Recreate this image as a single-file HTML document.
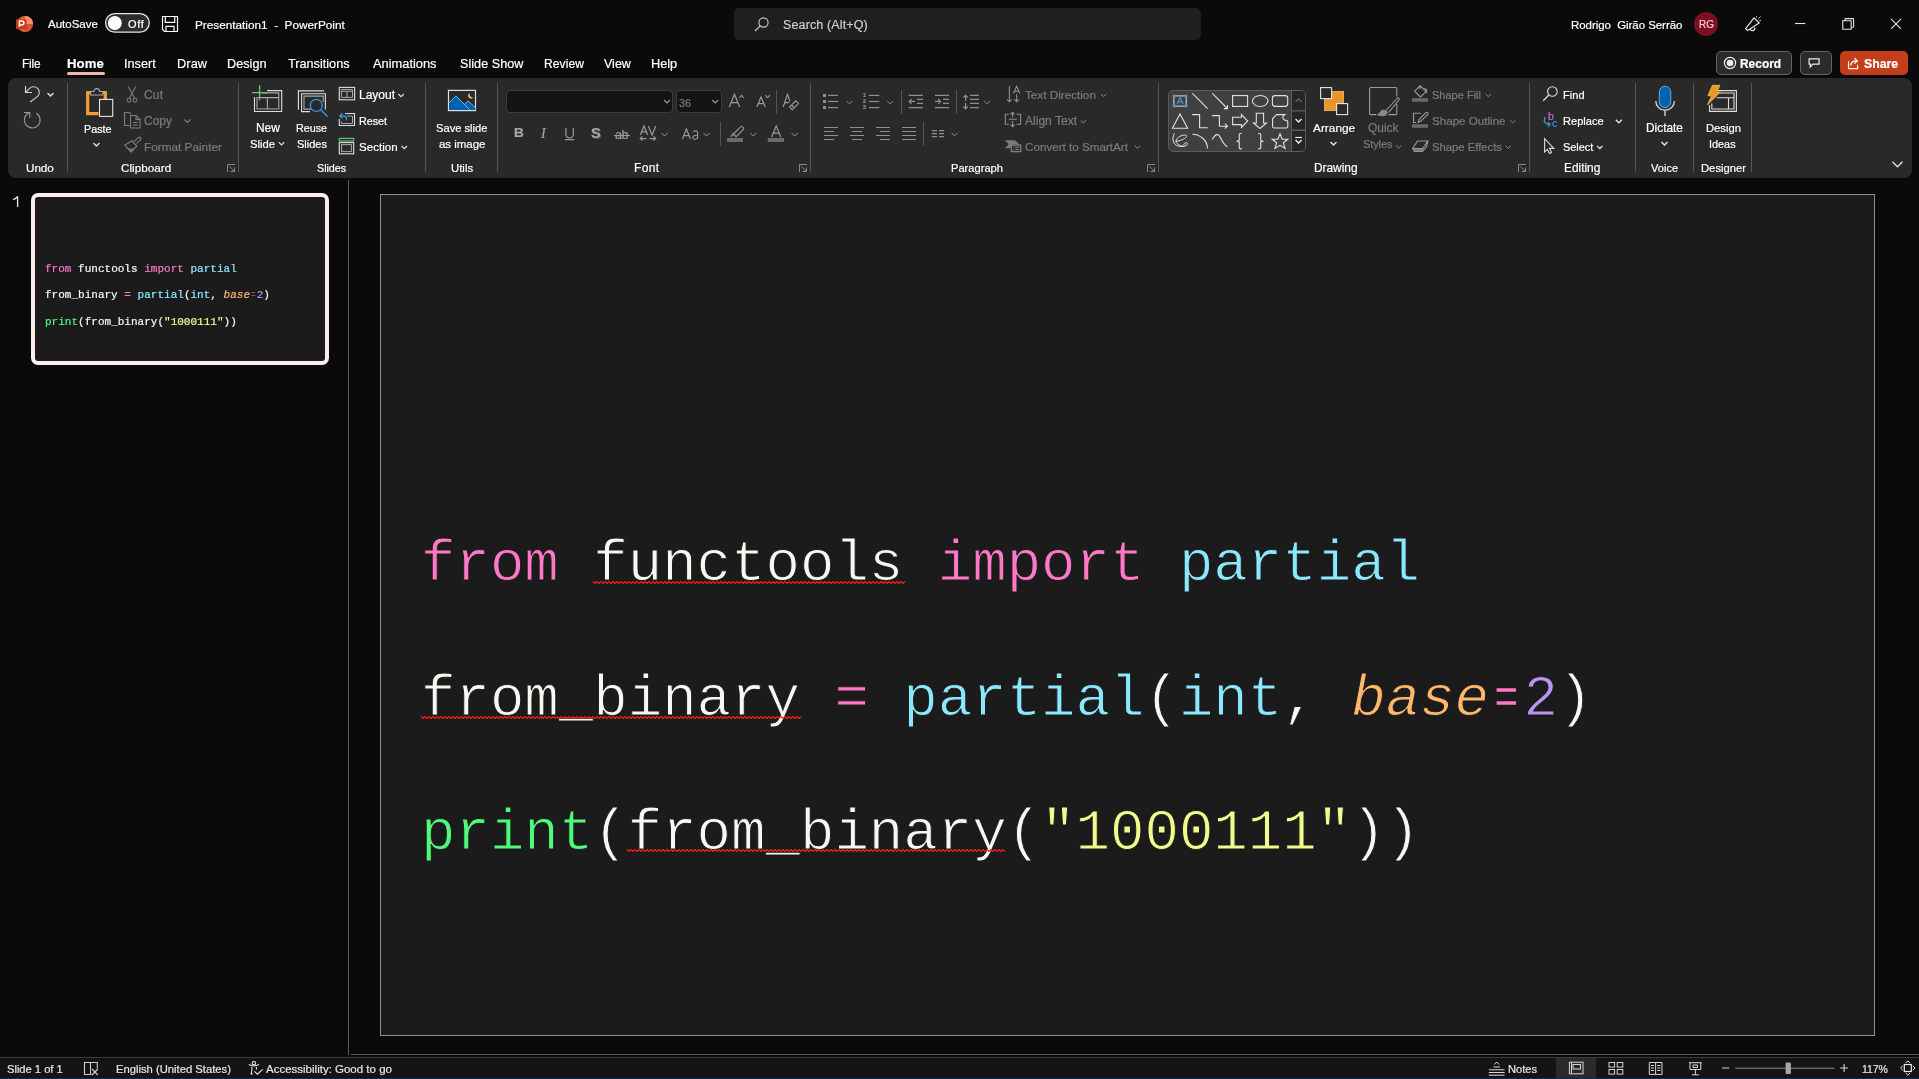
<!DOCTYPE html>
<html><head><meta charset="utf-8"><style>
html,body{margin:0;padding:0;}
body{width:1919px;height:1079px;overflow:hidden;background:#0a0a0a;position:relative;font-family:"Liberation Sans",sans-serif;}
.t{position:absolute;white-space:pre;will-change:transform;-webkit-text-stroke:0.2px currentColor;}
svg{overflow:visible}
</style></head><body>
<div class="t" style="left:48.00px;top:14.00px;font-size:11.52px;line-height:20.00px;color:#ffffff;font-weight:400;font-family:'Liberation Sans',sans-serif;">AutoSave</div>
<div class="t" style="left:194.50px;top:14.50px;font-size:11.78px;line-height:20.00px;color:#ffffff;font-weight:400;font-family:'Liberation Sans',sans-serif;">Presentation1  -  PowerPoint</div>
<div style="position:absolute;left:734px;top:8px;width:467px;height:32px;background:#1f1f1f;border-radius:5px;"></div>
<div class="t" style="left:783.00px;top:15.00px;font-size:12.50px;line-height:20.00px;color:#cfcfcf;font-weight:400;font-family:'Liberation Sans',sans-serif;letter-spacing:0.131px;">Search (Alt+Q)</div>
<div class="t" style="left:1571.00px;top:15.00px;font-size:11.45px;line-height:20.00px;color:#ffffff;font-weight:400;font-family:'Liberation Sans',sans-serif;letter-spacing:-0.025px;">Rodrigo  Girão Serrão</div>
<div class="t" style="left:22.00px;top:54.00px;font-size:11.88px;line-height:20.00px;color:#ffffff;font-weight:400;font-family:'Liberation Sans',sans-serif;letter-spacing:-0.208px;">File</div>
<div class="t" style="left:67.00px;top:53.50px;font-size:13.16px;line-height:20.00px;color:#ffffff;font-weight:700;font-family:'Liberation Sans',sans-serif;letter-spacing:0.083px;">Home</div>
<div class="t" style="left:123.75px;top:54.00px;font-size:12.65px;line-height:20.00px;color:#ffffff;font-weight:400;font-family:'Liberation Sans',sans-serif;letter-spacing:0.025px;">Insert</div>
<div class="t" style="left:177.00px;top:53.50px;font-size:12.77px;line-height:20.00px;color:#ffffff;font-weight:400;font-family:'Liberation Sans',sans-serif;letter-spacing:0.083px;">Draw</div>
<div class="t" style="left:227.00px;top:54.00px;font-size:12.64px;line-height:20.00px;color:#ffffff;font-weight:400;font-family:'Liberation Sans',sans-serif;letter-spacing:0.050px;">Design</div>
<div class="t" style="left:288.00px;top:54.00px;font-size:12.64px;line-height:20.00px;color:#ffffff;font-weight:400;font-family:'Liberation Sans',sans-serif;letter-spacing:0.025px;">Transitions</div>
<div class="t" style="left:372.50px;top:53.50px;font-size:12.85px;line-height:20.00px;color:#ffffff;font-weight:400;font-family:'Liberation Sans',sans-serif;">Animations</div>
<div class="t" style="left:459.50px;top:54.00px;font-size:12.63px;line-height:20.00px;color:#ffffff;font-weight:400;font-family:'Liberation Sans',sans-serif;letter-spacing:0.028px;">Slide Show</div>
<div class="t" style="left:544.00px;top:54.00px;font-size:12.06px;line-height:20.00px;color:#ffffff;font-weight:400;font-family:'Liberation Sans',sans-serif;letter-spacing:0.075px;">Review</div>
<div class="t" style="left:603.75px;top:54.00px;font-size:12.51px;line-height:20.00px;color:#ffffff;font-weight:400;font-family:'Liberation Sans',sans-serif;">View</div>
<div class="t" style="left:651.25px;top:53.50px;font-size:12.72px;line-height:20.00px;color:#ffffff;font-weight:400;font-family:'Liberation Sans',sans-serif;">Help</div>
<div style="position:absolute;left:67px;top:72px;width:38px;height:3px;background:#f2b5a8;border-radius:2px;"></div>
<div style="position:absolute;left:8px;top:78px;width:1904px;height:100px;background:#292929;border-radius:8px;"></div>
<div style="position:absolute;left:67px;top:83px;width:1px;height:89px;background:#545454;"></div>
<div style="position:absolute;left:238px;top:83px;width:1px;height:89px;background:#545454;"></div>
<div style="position:absolute;left:425px;top:83px;width:1px;height:89px;background:#545454;"></div>
<div style="position:absolute;left:497px;top:83px;width:1px;height:89px;background:#545454;"></div>
<div style="position:absolute;left:810px;top:83px;width:1px;height:89px;background:#545454;"></div>
<div style="position:absolute;left:1158px;top:83px;width:1px;height:89px;background:#545454;"></div>
<div style="position:absolute;left:1529px;top:83px;width:1px;height:89px;background:#545454;"></div>
<div style="position:absolute;left:1635px;top:83px;width:1px;height:89px;background:#545454;"></div>
<div style="position:absolute;left:1693px;top:83px;width:1px;height:89px;background:#545454;"></div>
<div style="position:absolute;left:1751px;top:83px;width:1px;height:89px;background:#545454;"></div>
<div style="position:absolute;left:776px;top:90px;width:1px;height:24px;background:#545454;"></div>
<div style="position:absolute;left:901px;top:90px;width:1px;height:24px;background:#545454;"></div>
<div style="position:absolute;left:956px;top:90px;width:1px;height:24px;background:#545454;"></div>
<div style="position:absolute;left:720px;top:122px;width:1px;height:24px;background:#545454;"></div>
<div style="position:absolute;left:923px;top:122px;width:1px;height:24px;background:#545454;"></div>
<div class="t" style="left:25.60px;top:157.50px;font-size:11.69px;line-height:20.00px;color:#ffffff;font-weight:400;font-family:'Liberation Sans',sans-serif;letter-spacing:-0.042px;">Undo</div>
<div class="t" style="left:120.60px;top:157.50px;font-size:11.68px;line-height:20.00px;color:#ffffff;font-weight:400;font-family:'Liberation Sans',sans-serif;letter-spacing:0.031px;">Clipboard</div>
<div class="t" style="left:317.00px;top:158.00px;font-size:10.80px;line-height:20.00px;color:#ffffff;font-weight:400;font-family:'Liberation Sans',sans-serif;letter-spacing:-0.050px;">Slides</div>
<div class="t" style="left:450.60px;top:158.00px;font-size:11.29px;line-height:20.00px;color:#ffffff;font-weight:400;font-family:'Liberation Sans',sans-serif;letter-spacing:0.031px;">Utils</div>
<div class="t" style="left:634.00px;top:158.00px;font-size:12.00px;line-height:20.00px;color:#ffffff;font-weight:400;font-family:'Liberation Sans',sans-serif;letter-spacing:0.333px;">Font</div>
<div class="t" style="left:950.60px;top:158.00px;font-size:11.14px;line-height:20.00px;color:#ffffff;font-weight:400;font-family:'Liberation Sans',sans-serif;">Paragraph</div>
<div class="t" style="left:1314.00px;top:158.00px;font-size:11.86px;line-height:20.00px;color:#ffffff;font-weight:400;font-family:'Liberation Sans',sans-serif;">Drawing</div>
<div class="t" style="left:1564.00px;top:158.00px;font-size:11.95px;line-height:20.00px;color:#ffffff;font-weight:400;font-family:'Liberation Sans',sans-serif;letter-spacing:-0.025px;">Editing</div>
<div class="t" style="left:1651.00px;top:158.00px;font-size:11.03px;line-height:20.00px;color:#ffffff;font-weight:400;font-family:'Liberation Sans',sans-serif;letter-spacing:0.031px;">Voice</div>
<div class="t" style="left:1700.60px;top:158.00px;font-size:11.25px;line-height:20.00px;color:#ffffff;font-weight:400;font-family:'Liberation Sans',sans-serif;">Designer</div>
<div class="t" style="left:83.50px;top:119.00px;font-size:10.80px;line-height:20.00px;color:#ffffff;font-weight:400;font-family:'Liberation Sans',sans-serif;">Paste</div>
<div class="t" style="left:144.00px;top:85.00px;font-size:12.00px;line-height:20.00px;color:#7c7c7c;font-weight:400;font-family:'Liberation Sans',sans-serif;letter-spacing:0.188px;">Cut</div>
<div class="t" style="left:144.00px;top:111.00px;font-size:12.00px;line-height:20.00px;color:#7c7c7c;font-weight:400;font-family:'Liberation Sans',sans-serif;">Copy</div>
<div class="t" style="left:144.00px;top:136.50px;font-size:11.79px;line-height:20.00px;color:#7c7c7c;font-weight:400;font-family:'Liberation Sans',sans-serif;">Format Painter</div>
<div class="t" style="left:256.00px;top:118.00px;font-size:11.94px;line-height:20.00px;color:#ffffff;font-weight:400;font-family:'Liberation Sans',sans-serif;letter-spacing:-0.062px;">New</div>
<div class="t" style="left:250.00px;top:134.00px;font-size:11.27px;line-height:20.00px;color:#ffffff;font-weight:400;font-family:'Liberation Sans',sans-serif;">Slide</div>
<div class="t" style="left:296.00px;top:118.00px;font-size:10.80px;line-height:20.00px;color:#ffffff;font-weight:400;font-family:'Liberation Sans',sans-serif;letter-spacing:-0.031px;">Reuse</div>
<div class="t" style="left:297.00px;top:134.00px;font-size:11.03px;line-height:20.00px;color:#ffffff;font-weight:400;font-family:'Liberation Sans',sans-serif;">Slides</div>
<div class="t" style="left:359.00px;top:85.00px;font-size:12.00px;line-height:20.00px;color:#ffffff;font-weight:400;font-family:'Liberation Sans',sans-serif;">Layout</div>
<div class="t" style="left:359.00px;top:111.00px;font-size:10.80px;line-height:20.00px;color:#ffffff;font-weight:400;font-family:'Liberation Sans',sans-serif;letter-spacing:-0.031px;">Reset</div>
<div class="t" style="left:359.00px;top:137.00px;font-size:11.55px;line-height:20.00px;color:#ffffff;font-weight:400;font-family:'Liberation Sans',sans-serif;letter-spacing:0.021px;">Section</div>
<div class="t" style="left:436.00px;top:118.00px;font-size:11.16px;line-height:20.00px;color:#ffffff;font-weight:400;font-family:'Liberation Sans',sans-serif;">Save slide</div>
<div class="t" style="left:438.50px;top:134.00px;font-size:11.45px;line-height:20.00px;color:#ffffff;font-weight:400;font-family:'Liberation Sans',sans-serif;">as image</div>
<div style="position:absolute;left:506px;top:90px;width:167px;height:23px;background:#141414;border:1px solid #3c3c3c;border-radius:4px;box-sizing:border-box;"></div>
<div style="position:absolute;left:676px;top:90px;width:46px;height:23px;background:#141414;border:1px solid #3c3c3c;border-radius:4px;box-sizing:border-box;"></div>
<div class="t" style="left:679.00px;top:93.00px;font-size:10.80px;line-height:20.00px;color:#7a7a7a;font-weight:400;font-family:'Liberation Sans',sans-serif;">36</div>
<div class="t" style="left:1025.00px;top:84.50px;font-size:11.71px;line-height:20.00px;color:#7c7c7c;font-weight:400;font-family:'Liberation Sans',sans-serif;">Text Direction</div>
<div class="t" style="left:1025.00px;top:111.00px;font-size:12.00px;line-height:20.00px;color:#7c7c7c;font-weight:400;font-family:'Liberation Sans',sans-serif;letter-spacing:0.028px;">Align Text</div>
<div class="t" style="left:1025.00px;top:136.50px;font-size:11.66px;line-height:20.00px;color:#7c7c7c;font-weight:400;font-family:'Liberation Sans',sans-serif;">Convert to SmartArt</div>
<div class="t" style="left:1313.00px;top:117.50px;font-size:11.79px;line-height:20.00px;color:#ffffff;font-weight:400;font-family:'Liberation Sans',sans-serif;letter-spacing:0.042px;">Arrange</div>
<div class="t" style="left:1367.50px;top:118.00px;font-size:11.90px;line-height:20.00px;color:#7c7c7c;font-weight:400;font-family:'Liberation Sans',sans-serif;letter-spacing:0.031px;">Quick</div>
<div class="t" style="left:1362.50px;top:134.00px;font-size:10.85px;line-height:20.00px;color:#7c7c7c;font-weight:400;font-family:'Liberation Sans',sans-serif;letter-spacing:-0.025px;">Styles</div>
<div class="t" style="left:1432.00px;top:85.00px;font-size:11.02px;line-height:20.00px;color:#7c7c7c;font-weight:400;font-family:'Liberation Sans',sans-serif;">Shape Fill</div>
<div class="t" style="left:1432.00px;top:110.50px;font-size:11.62px;line-height:20.00px;color:#7c7c7c;font-weight:400;font-family:'Liberation Sans',sans-serif;">Shape Outline</div>
<div class="t" style="left:1432.00px;top:137.00px;font-size:11.28px;line-height:20.00px;color:#7c7c7c;font-weight:400;font-family:'Liberation Sans',sans-serif;">Shape Effects</div>
<div class="t" style="left:1562.50px;top:85.00px;font-size:11.04px;line-height:20.00px;color:#ffffff;font-weight:400;font-family:'Liberation Sans',sans-serif;letter-spacing:0.042px;">Find</div>
<div class="t" style="left:1562.50px;top:111.00px;font-size:11.05px;line-height:20.00px;color:#ffffff;font-weight:400;font-family:'Liberation Sans',sans-serif;letter-spacing:0.021px;">Replace</div>
<div class="t" style="left:1562.50px;top:137.00px;font-size:10.97px;line-height:20.00px;color:#ffffff;font-weight:400;font-family:'Liberation Sans',sans-serif;letter-spacing:-0.025px;">Select</div>
<div class="t" style="left:1646.00px;top:118.00px;font-size:11.88px;line-height:20.00px;color:#ffffff;font-weight:400;font-family:'Liberation Sans',sans-serif;">Dictate</div>
<div class="t" style="left:1705.60px;top:118.00px;font-size:11.24px;line-height:20.00px;color:#ffffff;font-weight:400;font-family:'Liberation Sans',sans-serif;">Design</div>
<div class="t" style="left:1709.00px;top:134.00px;font-size:10.87px;line-height:20.00px;color:#ffffff;font-weight:400;font-family:'Liberation Sans',sans-serif;">Ideas</div>
<div style="position:absolute;left:1716px;top:51px;width:76px;height:24px;background:#2b2b2b;border:1px solid #666;border-radius:5px;box-sizing:border-box;"></div>
<div class="t" style="left:1740.00px;top:54.00px;font-size:11.91px;line-height:20.00px;color:#ffffff;font-weight:700;font-family:'Liberation Sans',sans-serif;letter-spacing:0.025px;">Record</div>
<div style="position:absolute;left:1800px;top:51px;width:32px;height:24px;background:#2b2b2b;border:1px solid #666;border-radius:5px;box-sizing:border-box;"></div>
<div style="position:absolute;left:1840px;top:51px;width:68px;height:24px;background:#c43e1c;border-radius:5px;"></div>
<div class="t" style="left:1864.00px;top:54.00px;font-size:12.24px;line-height:20.00px;color:#ffffff;font-weight:700;font-family:'Liberation Sans',sans-serif;">Share</div>
<div style="position:absolute;left:348px;top:180px;width:1px;height:875px;background:#5a5a5a;"></div>
<div style="position:absolute;left:31px;top:193px;width:298px;height:172px;border:4px solid #fbeeec;border-radius:7px;box-sizing:border-box;background:#1b1b1b;"></div>
<div style="position:absolute;left:380px;top:194px;width:1495px;height:842px;border:1px solid #8f8f8f;box-sizing:border-box;background:#1b1b1b;"></div>
<div style="position:absolute;left:351px;top:1054px;width:1568px;height:1px;background:#585858;"></div>
<div style="position:absolute;left:0px;top:1057px;width:1919px;height:1px;background:#3a3a3a;"></div>
<div style="position:absolute;left:0px;top:1058px;width:1919px;height:21px;background:#141414;"></div>
<div style="position:absolute;left:0px;top:1078px;width:1919px;height:1px;background:#0a2d4e;"></div>
<div class="t" style="left:7.00px;top:1059.00px;font-size:11.20px;line-height:20.00px;color:#e6e6e6;font-weight:400;font-family:'Liberation Sans',sans-serif;letter-spacing:-0.023px;">Slide 1 of 1</div>
<div class="t" style="left:115.50px;top:1059.00px;font-size:11.24px;line-height:20.00px;color:#e6e6e6;font-weight:400;font-family:'Liberation Sans',sans-serif;">English (United States)</div>
<div class="t" style="left:266.00px;top:1058.50px;font-size:11.50px;line-height:20.00px;color:#e6e6e6;font-weight:400;font-family:'Liberation Sans',sans-serif;">Accessibility: Good to go</div>
<div class="t" style="left:1507.50px;top:1059.00px;font-size:11.19px;line-height:20.00px;color:#e6e6e6;font-weight:400;font-family:'Liberation Sans',sans-serif;letter-spacing:-0.044px;">Notes</div>
<div style="position:absolute;left:1556px;top:1058px;width:40px;height:20px;background:#2a2a2a;"></div>
<div class="t" style="left:1861.60px;top:1059.50px;font-size:10.49px;line-height:20.00px;color:#e6e6e6;font-weight:400;font-family:'Liberation Sans',sans-serif;letter-spacing:-0.042px;">117%</div>
<div class="t" style="left:421.00px;top:497.92px;font-size:57.424px;line-height:134.00px;font-family:'Liberation Mono',monospace;-webkit-text-stroke:1px #1b1b1b;"><span style="color:#ff79c6;">from</span><span style="color:#f8f8f2;"> </span><span style="color:#f8f8f2;">functools</span><span style="color:#f8f8f2;"> </span><span style="color:#ff79c6;">import</span><span style="color:#f8f8f2;"> </span><span style="color:#8be9fd;">partial</span></div>
<div class="t" style="left:421.00px;top:633.02px;font-size:57.424px;line-height:134.00px;font-family:'Liberation Mono',monospace;-webkit-text-stroke:1px #1b1b1b;"><span style="color:#f8f8f2;">from_binary</span><span style="color:#f8f8f2;"> </span><span style="color:#ff79c6;">=</span><span style="color:#f8f8f2;"> </span><span style="color:#8be9fd;">partial</span><span style="color:#f8f8f2;">(</span><span style="color:#8be9fd;">int</span><span style="color:#f8f8f2;">, </span><span style="color:#ffb86c;font-style:italic;">base</span><span style="color:#ff79c6;display:inline-block;transform:scale(0.7,0.95);transform-origin:50%% 60%%;-webkit-text-stroke:0.4px #1b1b1b;">=</span><span style="color:#bd93f9;">2</span><span style="color:#f8f8f2;">)</span></div>
<div class="t" style="left:421.00px;top:766.62px;font-size:57.424px;line-height:134.00px;font-family:'Liberation Mono',monospace;-webkit-text-stroke:1px #1b1b1b;"><span style="color:#50fa7b;">print</span><span style="color:#f8f8f2;">(</span><span style="color:#f8f8f2;">from_binary</span><span style="color:#f8f8f2;">(</span><span style="color:#f1fa8c;">"1000111"</span><span style="color:#f8f8f2;">)</span><span style="color:#f8f8f2;">)</span></div>
<svg style="position:absolute;left:593px;top:581px;" width="312" height="4" viewBox="0 0 312 4" fill="none"><polyline points="0.0,0.5 2.0,2.5 4.0,0.5 6.0,2.5 8.0,0.5 10.0,2.5 12.0,0.5 14.0,2.5 16.0,0.5 18.0,2.5 20.0,0.5 22.0,2.5 24.0,0.5 26.0,2.5 28.0,0.5 30.0,2.5 32.0,0.5 34.0,2.5 36.0,0.5 38.0,2.5 40.0,0.5 42.0,2.5 44.0,0.5 46.0,2.5 48.0,0.5 50.0,2.5 52.0,0.5 54.0,2.5 56.0,0.5 58.0,2.5 60.0,0.5 62.0,2.5 64.0,0.5 66.0,2.5 68.0,0.5 70.0,2.5 72.0,0.5 74.0,2.5 76.0,0.5 78.0,2.5 80.0,0.5 82.0,2.5 84.0,0.5 86.0,2.5 88.0,0.5 90.0,2.5 92.0,0.5 94.0,2.5 96.0,0.5 98.0,2.5 100.0,0.5 102.0,2.5 104.0,0.5 106.0,2.5 108.0,0.5 110.0,2.5 112.0,0.5 114.0,2.5 116.0,0.5 118.0,2.5 120.0,0.5 122.0,2.5 124.0,0.5 126.0,2.5 128.0,0.5 130.0,2.5 132.0,0.5 134.0,2.5 136.0,0.5 138.0,2.5 140.0,0.5 142.0,2.5 144.0,0.5 146.0,2.5 148.0,0.5 150.0,2.5 152.0,0.5 154.0,2.5 156.0,0.5 158.0,2.5 160.0,0.5 162.0,2.5 164.0,0.5 166.0,2.5 168.0,0.5 170.0,2.5 172.0,0.5 174.0,2.5 176.0,0.5 178.0,2.5 180.0,0.5 182.0,2.5 184.0,0.5 186.0,2.5 188.0,0.5 190.0,2.5 192.0,0.5 194.0,2.5 196.0,0.5 198.0,2.5 200.0,0.5 202.0,2.5 204.0,0.5 206.0,2.5 208.0,0.5 210.0,2.5 212.0,0.5 214.0,2.5 216.0,0.5 218.0,2.5 220.0,0.5 222.0,2.5 224.0,0.5 226.0,2.5 228.0,0.5 230.0,2.5 232.0,0.5 234.0,2.5 236.0,0.5 238.0,2.5 240.0,0.5 242.0,2.5 244.0,0.5 246.0,2.5 248.0,0.5 250.0,2.5 252.0,0.5 254.0,2.5 256.0,0.5 258.0,2.5 260.0,0.5 262.0,2.5 264.0,0.5 266.0,2.5 268.0,0.5 270.0,2.5 272.0,0.5 274.0,2.5 276.0,0.5 278.0,2.5 280.0,0.5 282.0,2.5 284.0,0.5 286.0,2.5 288.0,0.5 290.0,2.5 292.0,0.5 294.0,2.5 296.0,0.5 298.0,2.5 300.0,0.5 302.0,2.5 304.0,0.5 306.0,2.5 308.0,0.5 310.0,2.5 312.0,0.5" stroke="#ff1c1c" stroke-width="1.15" fill="none"/></svg>
<svg style="position:absolute;left:421px;top:716px;" width="380" height="4" viewBox="0 0 380 4" fill="none"><polyline points="0.0,0.5 2.0,2.5 4.0,0.5 6.0,2.5 8.0,0.5 10.0,2.5 12.0,0.5 14.0,2.5 16.0,0.5 18.0,2.5 20.0,0.5 22.0,2.5 24.0,0.5 26.0,2.5 28.0,0.5 30.0,2.5 32.0,0.5 34.0,2.5 36.0,0.5 38.0,2.5 40.0,0.5 42.0,2.5 44.0,0.5 46.0,2.5 48.0,0.5 50.0,2.5 52.0,0.5 54.0,2.5 56.0,0.5 58.0,2.5 60.0,0.5 62.0,2.5 64.0,0.5 66.0,2.5 68.0,0.5 70.0,2.5 72.0,0.5 74.0,2.5 76.0,0.5 78.0,2.5 80.0,0.5 82.0,2.5 84.0,0.5 86.0,2.5 88.0,0.5 90.0,2.5 92.0,0.5 94.0,2.5 96.0,0.5 98.0,2.5 100.0,0.5 102.0,2.5 104.0,0.5 106.0,2.5 108.0,0.5 110.0,2.5 112.0,0.5 114.0,2.5 116.0,0.5 118.0,2.5 120.0,0.5 122.0,2.5 124.0,0.5 126.0,2.5 128.0,0.5 130.0,2.5 132.0,0.5 134.0,2.5 136.0,0.5 138.0,2.5 140.0,0.5 142.0,2.5 144.0,0.5 146.0,2.5 148.0,0.5 150.0,2.5 152.0,0.5 154.0,2.5 156.0,0.5 158.0,2.5 160.0,0.5 162.0,2.5 164.0,0.5 166.0,2.5 168.0,0.5 170.0,2.5 172.0,0.5 174.0,2.5 176.0,0.5 178.0,2.5 180.0,0.5 182.0,2.5 184.0,0.5 186.0,2.5 188.0,0.5 190.0,2.5 192.0,0.5 194.0,2.5 196.0,0.5 198.0,2.5 200.0,0.5 202.0,2.5 204.0,0.5 206.0,2.5 208.0,0.5 210.0,2.5 212.0,0.5 214.0,2.5 216.0,0.5 218.0,2.5 220.0,0.5 222.0,2.5 224.0,0.5 226.0,2.5 228.0,0.5 230.0,2.5 232.0,0.5 234.0,2.5 236.0,0.5 238.0,2.5 240.0,0.5 242.0,2.5 244.0,0.5 246.0,2.5 248.0,0.5 250.0,2.5 252.0,0.5 254.0,2.5 256.0,0.5 258.0,2.5 260.0,0.5 262.0,2.5 264.0,0.5 266.0,2.5 268.0,0.5 270.0,2.5 272.0,0.5 274.0,2.5 276.0,0.5 278.0,2.5 280.0,0.5 282.0,2.5 284.0,0.5 286.0,2.5 288.0,0.5 290.0,2.5 292.0,0.5 294.0,2.5 296.0,0.5 298.0,2.5 300.0,0.5 302.0,2.5 304.0,0.5 306.0,2.5 308.0,0.5 310.0,2.5 312.0,0.5 314.0,2.5 316.0,0.5 318.0,2.5 320.0,0.5 322.0,2.5 324.0,0.5 326.0,2.5 328.0,0.5 330.0,2.5 332.0,0.5 334.0,2.5 336.0,0.5 338.0,2.5 340.0,0.5 342.0,2.5 344.0,0.5 346.0,2.5 348.0,0.5 350.0,2.5 352.0,0.5 354.0,2.5 356.0,0.5 358.0,2.5 360.0,0.5 362.0,2.5 364.0,0.5 366.0,2.5 368.0,0.5 370.0,2.5 372.0,0.5 374.0,2.5 376.0,0.5 378.0,2.5 380.0,0.5" stroke="#ff1c1c" stroke-width="1.15" fill="none"/></svg>
<svg style="position:absolute;left:627px;top:849px;" width="378" height="4" viewBox="0 0 378 4" fill="none"><polyline points="0.0,0.5 2.0,2.5 4.0,0.5 6.0,2.5 8.0,0.5 10.0,2.5 12.0,0.5 14.0,2.5 16.0,0.5 18.0,2.5 20.0,0.5 22.0,2.5 24.0,0.5 26.0,2.5 28.0,0.5 30.0,2.5 32.0,0.5 34.0,2.5 36.0,0.5 38.0,2.5 40.0,0.5 42.0,2.5 44.0,0.5 46.0,2.5 48.0,0.5 50.0,2.5 52.0,0.5 54.0,2.5 56.0,0.5 58.0,2.5 60.0,0.5 62.0,2.5 64.0,0.5 66.0,2.5 68.0,0.5 70.0,2.5 72.0,0.5 74.0,2.5 76.0,0.5 78.0,2.5 80.0,0.5 82.0,2.5 84.0,0.5 86.0,2.5 88.0,0.5 90.0,2.5 92.0,0.5 94.0,2.5 96.0,0.5 98.0,2.5 100.0,0.5 102.0,2.5 104.0,0.5 106.0,2.5 108.0,0.5 110.0,2.5 112.0,0.5 114.0,2.5 116.0,0.5 118.0,2.5 120.0,0.5 122.0,2.5 124.0,0.5 126.0,2.5 128.0,0.5 130.0,2.5 132.0,0.5 134.0,2.5 136.0,0.5 138.0,2.5 140.0,0.5 142.0,2.5 144.0,0.5 146.0,2.5 148.0,0.5 150.0,2.5 152.0,0.5 154.0,2.5 156.0,0.5 158.0,2.5 160.0,0.5 162.0,2.5 164.0,0.5 166.0,2.5 168.0,0.5 170.0,2.5 172.0,0.5 174.0,2.5 176.0,0.5 178.0,2.5 180.0,0.5 182.0,2.5 184.0,0.5 186.0,2.5 188.0,0.5 190.0,2.5 192.0,0.5 194.0,2.5 196.0,0.5 198.0,2.5 200.0,0.5 202.0,2.5 204.0,0.5 206.0,2.5 208.0,0.5 210.0,2.5 212.0,0.5 214.0,2.5 216.0,0.5 218.0,2.5 220.0,0.5 222.0,2.5 224.0,0.5 226.0,2.5 228.0,0.5 230.0,2.5 232.0,0.5 234.0,2.5 236.0,0.5 238.0,2.5 240.0,0.5 242.0,2.5 244.0,0.5 246.0,2.5 248.0,0.5 250.0,2.5 252.0,0.5 254.0,2.5 256.0,0.5 258.0,2.5 260.0,0.5 262.0,2.5 264.0,0.5 266.0,2.5 268.0,0.5 270.0,2.5 272.0,0.5 274.0,2.5 276.0,0.5 278.0,2.5 280.0,0.5 282.0,2.5 284.0,0.5 286.0,2.5 288.0,0.5 290.0,2.5 292.0,0.5 294.0,2.5 296.0,0.5 298.0,2.5 300.0,0.5 302.0,2.5 304.0,0.5 306.0,2.5 308.0,0.5 310.0,2.5 312.0,0.5 314.0,2.5 316.0,0.5 318.0,2.5 320.0,0.5 322.0,2.5 324.0,0.5 326.0,2.5 328.0,0.5 330.0,2.5 332.0,0.5 334.0,2.5 336.0,0.5 338.0,2.5 340.0,0.5 342.0,2.5 344.0,0.5 346.0,2.5 348.0,0.5 350.0,2.5 352.0,0.5 354.0,2.5 356.0,0.5 358.0,2.5 360.0,0.5 362.0,2.5 364.0,0.5 366.0,2.5 368.0,0.5 370.0,2.5 372.0,0.5 374.0,2.5 376.0,0.5 378.0,2.5" stroke="#ff1c1c" stroke-width="1.15" fill="none"/></svg>
<div class="t" style="left:44.60px;top:256.06px;font-size:11.031px;line-height:26.00px;font-family:'Liberation Mono',monospace;-webkit-text-stroke:0.2px currentColor;"><span style="color:#ff79c6;">from</span><span style="color:#f8f8f2;"> </span><span style="color:#f8f8f2;">functools</span><span style="color:#f8f8f2;"> </span><span style="color:#ff79c6;">import</span><span style="color:#f8f8f2;"> </span><span style="color:#8be9fd;">partial</span></div>
<div class="t" style="left:44.60px;top:282.06px;font-size:11.031px;line-height:26.00px;font-family:'Liberation Mono',monospace;-webkit-text-stroke:0.2px currentColor;"><span style="color:#f8f8f2;">from_binary</span><span style="color:#f8f8f2;"> </span><span style="color:#ff79c6;">=</span><span style="color:#f8f8f2;"> </span><span style="color:#8be9fd;">partial</span><span style="color:#f8f8f2;">(</span><span style="color:#8be9fd;">int</span><span style="color:#f8f8f2;">, </span><span style="color:#ffb86c;font-style:italic;">base</span><span style="color:#ff79c6;display:inline-block;transform:scale(0.7,0.95);transform-origin:50%% 60%%;-webkit-text-stroke:0.4px #1b1b1b;">=</span><span style="color:#bd93f9;">2</span><span style="color:#f8f8f2;">)</span></div>
<div class="t" style="left:44.60px;top:308.56px;font-size:11.031px;line-height:26.00px;font-family:'Liberation Mono',monospace;-webkit-text-stroke:0.2px currentColor;"><span style="color:#50fa7b;">print</span><span style="color:#f8f8f2;">(</span><span style="color:#f8f8f2;">from_binary</span><span style="color:#f8f8f2;">(</span><span style="color:#f1fa8c;">"1000111"</span><span style="color:#f8f8f2;">)</span><span style="color:#f8f8f2;">)</span></div>
<svg style="position:absolute;left:15px;top:15px;" width="18" height="18" viewBox="0 0 18 18" fill="none"><circle cx="10" cy="9" r="8" fill="#e8603c"/>
<path d="M10 1 A8 8 0 0 1 18 9 L10 9 Z" fill="#ff8f6b"/>
<path d="M18 9 A8 8 0 0 1 10 17 L10 9 Z" fill="#d35230"/>
<rect x="1" y="4.3" width="10.6" height="10" rx="0.8" fill="#c43e1c"/>
<path d="M4.4 11.8 V6 H6.6 Q8.9 6 8.9 8 Q8.9 10 6.6 10 H4.4" stroke="#fff" stroke-width="1.5" fill="none"/></svg>
<svg style="position:absolute;left:104px;top:12px;" width="47" height="22" viewBox="0 0 47 22" fill="none"><rect x="1.6" y="1.6" width="43.6" height="18.6" rx="9.3" fill="#2b2b2b" stroke="#e6e6e6" stroke-width="1.3"/>
<circle cx="10.8" cy="11" r="7" fill="#ffffff"/></svg>
<div class="t" style="left:127.90px;top:14.20px;font-size:11.00px;line-height:20.00px;color:#ffffff;font-weight:400;font-family:'Liberation Sans',sans-serif;letter-spacing:0.650px;">Off</div>
<svg style="position:absolute;left:161px;top:15px;" width="18" height="18" viewBox="0 0 18 18" fill="none"><path d="M1.5 1.5 H16.5 V16.5 H3.5 L1.5 14.5 Z" stroke="#fff" stroke-width="1.2"/>
<path d="M4.3 1.5 V7.3 H13.7 V1.5" stroke="#fff" stroke-width="1.2"/>
<path d="M5 16.5 V11.3 H13 V16.5" stroke="#fff" stroke-width="1.2"/></svg>
<svg style="position:absolute;left:754px;top:16px;" width="16" height="16" viewBox="0 0 16 16" fill="none"><circle cx="9.5" cy="6.5" r="4.6" stroke="#cfcfcf" stroke-width="1.1"/>
<path d="M6.2 9.8 L1.5 14.5" stroke="#cfcfcf" stroke-width="1.2" stroke-linecap="round"/></svg>
<div class="t" style="left:514.2px;top:126.1px;font-size:13.6px;line-height:14px;font-weight:700;color:#a6a6a6;">B</div>
<div class="t" style="left:541.3px;top:127px;font-size:14px;line-height:14px;font-style:italic;font-family:'Liberation Serif',serif;color:#a6a6a6;">I</div>
<div class="t" style="left:591px;top:125.5px;font-size:14.5px;line-height:14px;font-weight:700;color:#a6a6a6;text-shadow:1px 1px 1px #555;">S</div>
<div class="t" style="left:615.4px;top:129.2px;font-size:12.5px;line-height:12px;color:#a0a0a0;letter-spacing:-0.5px;">ab</div>
<div class="t" style="left:863.3px;top:91.5px;font-size:5.5px;line-height:6.1px;color:#8f8f8f;font-weight:700;">1<br>2<br>3</div>
<div class="t" style="left:1547.6px;top:111.4px;font-size:10.5px;line-height:10px;color:#c96dd8;">b</div>
<div class="t" style="left:1551.6px;top:118.4px;font-size:10.5px;line-height:10px;color:#3a96dd;">c</div>
<div style="position:absolute;left:1694px;top:12px;width:24px;height:24px;background:#7a1020;border-radius:50%;"></div>
<div class="t" style="left:1698.50px;top:15.00px;font-size:10.00px;line-height:20.00px;color:#f4c8d0;font-weight:400;font-family:'Liberation Sans',sans-serif;">RG</div>
<svg style="position:absolute;left:0;top:0;pointer-events:none" width="1919" height="1079" viewBox="0 0 1919 1079" fill="none"><path d="M25.5 86 V92.5 H32" stroke="#d4d4d4" stroke-width="1.1" fill="none" />
<path d="M25.8 92.2 L29.6 88.4 A5.6 5.6 0 0 1 37.6 96.4 L30.2 102" stroke="#d4d4d4" stroke-width="1.1" fill="none" />
<path d="M47.50 93.00 L50.50 96.00 L53.50 93.00" stroke="#e0e0e0" stroke-width="1.4" fill="none" />
<path d="M24 112.5 H29.8 V117.8" stroke="#9a9a9a" stroke-width="1.1" fill="none" />
<path d="M36.3 113.3 A7.9 7.9 0 1 1 29.6 112.6" stroke="#9a9a9a" stroke-width="1.1" fill="none" />
<path d="M101 92.5 H105.3 V99 M98.5 113.6 H87.7 V92.5 H91.5" stroke="#f0a030" stroke-width="3.2" fill="none" />
<path d="M90.5 91.5 H93.8 A2.9 2.9 0 0 1 99.6 91.5 H102.9 V95 H90.5 Z" stroke="#a8a8a8" stroke-width="1.1" fill="#292929"/>
<rect x="99.5" y="99.4" width="13.2" height="17" rx="0" stroke="#e6e6e6" stroke-width="1.1" fill="#292929"/>
<path d="M93.50 143.00 L96.50 146.00 L99.50 143.00" stroke="#e0e0e0" stroke-width="1.4" fill="none" />
<path d="M128.2 86.5 L134.5 98 M135.8 86.5 L129.5 98" stroke="#7d7d7d" stroke-width="1.1" fill="none" />
<circle cx="129" cy="100.2" r="1.9" stroke="#7d7d7d" stroke-width="1.1" fill="none"/>
<circle cx="135" cy="100.2" r="1.9" stroke="#7d7d7d" stroke-width="1.1" fill="none"/>
<path d="M129.6 125.5 H124.5 V112.5 H129.5 L131 114" stroke="#7d7d7d" stroke-width="1.1" fill="none" />
<path d="M130.5 115.5 H136 L140 119.5 V128 H130.5 Z M136 115.5 V119.5 H140 M133 122.5 H137.5 M133 125 H137.5" stroke="#7d7d7d" stroke-width="1.1" fill="none" />
<path d="M184.50 119.50 L187.50 122.50 L190.50 119.50" stroke="#7d7d7d" stroke-width="1.1" fill="none" />
<path d="M127.2 148.3 L134.6 148.6 L131.2 152 Z" fill="#707070"/>
<path d="M124.6 145.2 L132.1 140.8 L136.8 145.9 L131.2 152.2 Z M132.3 141.4 L136.3 145.6" stroke="#7d7d7d" stroke-width="1.1" fill="none" />
<path d="M134.2 141.3 L138.3 137.6 A1.55 1.55 0 0 1 140.5 139.8 L136.5 143.7" stroke="#7d7d7d" stroke-width="1.1" fill="none" />
<path d="M227.5 172.0 V164.5 H235.0" stroke="#8a8a8a" stroke-width="1" fill="none" />
<path d="M229.5 166.5 L234.5 171.5 M230.5 171.5 H234.5 V167.5" stroke="#8a8a8a" stroke-width="1" fill="none" />
<path d="M267 90.6 H281.7 V111.5 H254.5 V97" stroke="#dedede" stroke-width="1.1" fill="none" />
<path d="M262 92.9 H278.8 V109 H257 V97.6 H278.8 M267.4 97.6 V109" stroke="#a8a8a8" stroke-width="1.1" fill="none" />
<path d="M259.6 85.2 V100.3 M252 92.6 H267" stroke="#64c878" stroke-width="1.3" fill="none" />
<path d="M278.75 142.15 L281.50 144.85 L284.25 142.15" stroke="#e0e0e0" stroke-width="1.2" fill="none" />
<path d="M298.4 109.8 V90.9 H324" stroke="#dedede" stroke-width="1.1" fill="none" />
<path d="M310 111.6 H301.6 V93.7 H325.4 V109.5" stroke="#dedede" stroke-width="1.1" fill="none" />
<path d="M311 109.1 H304 V96.1 H323.3 V102" stroke="#a8a8a8" stroke-width="1.1" fill="none" />
<circle cx="316.3" cy="105.4" r="6" stroke="#3a96dd" stroke-width="1.3" fill="none"/>
<path d="M320.6 109.8 L327.6 116.5" stroke="#3a96dd" stroke-width="1.4" fill="none" />
<rect x="339.3" y="87.4" width="15.3" height="12.4" rx="0" stroke="#dedede" stroke-width="1.1" fill="none"/>
<path d="M341.4 91.3 H352.5 V97.4 H341.4 Z M341.4 91.3 V89.6 H352.5 V91.3 M347 91.3 V97.4" stroke="#a8a8a8" stroke-width="1.0" fill="none" />
<path d="M398.25 93.95 L401.00 96.65 L403.75 93.95" stroke="#e0e0e0" stroke-width="1.2" fill="none" />
<path d="M345 113.5 H354.5 V125.5 H339.3 V119" stroke="#dedede" stroke-width="1.1" fill="none" />
<path d="M347 116 H352.5 V123.5 H341.4 V121.5" stroke="#a8a8a8" stroke-width="1.0" fill="none" />
<path d="M339.6 116 L342.5 113.3 M339.6 116 L342.5 118.5 M339.8 116 H343.5 A3 3 0 0 1 346.5 119 V120.5" stroke="#3a96dd" stroke-width="1.3" fill="none" />
<rect x="339.3" y="138.4" width="14.4" height="2.6" rx="0" stroke="#64c878" stroke-width="1.1" fill="none"/>
<rect x="339.3" y="142.6" width="14.4" height="11.2" rx="0" stroke="#dedede" stroke-width="1.1" fill="none"/>
<rect x="341.6" y="144.6" width="9.8" height="7" rx="0" stroke="#a8a8a8" stroke-width="1.0" fill="none"/>
<path d="M401.55 145.95 L404.30 148.65 L407.05 145.95" stroke="#e0e0e0" stroke-width="1.2" fill="none" />
<rect x="448.5" y="90.4" width="27" height="20.2" rx="0" stroke="#e0e0e0" stroke-width="1.2" fill="none"/>
<path d="M449.1 102.7 L456 95.9 L464.6 104.4 L468 100.9 L475.4 107.6 V110 H449.1 Z" fill="#0063b1"/>
<path d="M449.1 102.7 L456 95.9 L469.5 109.6 M464.6 104.4 L468 100.9 L475.4 107.6" stroke="#78c6f3" stroke-width="0.9" fill="none" />
<path d="M469.8 93 A3 3 0 1 0 473.4 97.6 A3.6 3.6 0 0 1 469.8 93 Z" fill="#f7b84b"/>
<path d="M664.00 100.00 L667.00 103.00 L670.00 100.00" stroke="#9a9a9a" stroke-width="1.1" fill="none" />
<path d="M712.20 100.00 L715.20 103.00 L718.20 100.00" stroke="#9a9a9a" stroke-width="1.1" fill="none" />
<path d="M729.3 107 L734.5 94.4 L739.7 107 M731.2 102.6 H737.8" stroke="#9a9a9a" stroke-width="1.2" fill="none" />
<path d="M739.4 98 L741.6 95.4 L743.8 98" stroke="#9a9a9a" stroke-width="1.1" fill="none" />
<path d="M756.8 107 L761 97 L765.2 107 M758.3 103.6 H763.7" stroke="#9a9a9a" stroke-width="1.2" fill="none" />
<path d="M765.2 95.2 L767.6 97.8 L770 95.2" stroke="#9a9a9a" stroke-width="1.1" fill="none" />
<path d="M783.2 107 L787.5 94.4 L790 101.5 M784.8 102.6 H789" stroke="#9a9a9a" stroke-width="1.2" fill="none" />
<path d="M791.5 109 L789.6 107.1 L795.8 100.8 L798.5 103.5 L792.3 109.8 Z M791.3 104.9 L794.5 108" stroke="#9a9a9a" stroke-width="1.1" fill="none"/>
<path d="M565.9 128 V134.2 A3.7 3.7 0 0 0 573.3 134.2 V128 M565 139.6 H574" stroke="#9a9a9a" stroke-width="1.2" fill="none" />
<path d="M613.9 135.5 H630" stroke="#9a9a9a" stroke-width="1.1" fill="none" />
<path d="M640.3 135 L644 125.9 L647.7 135 M641.6 131.8 H646.4 M648.4 125.9 L652.1 135 L655.8 125.9" stroke="#9a9a9a" stroke-width="1.2" fill="none" />
<path d="M640.2 138.6 H646.5 M642.5 136.5 L640.2 138.6 L642.5 140.7 M649.5 138.6 H655.8 M653.5 136.5 L655.8 138.6 L653.5 140.7" stroke="#9a9a9a" stroke-width="1.1" fill="none" />
<path d="M661.50 133.00 L664.50 136.00 L667.50 133.00" stroke="#9a9a9a" stroke-width="1.0" fill="none" />
<path d="M682.4 139 L686.4 129 L690.4 139 M683.8 135.6 H689" stroke="#9a9a9a" stroke-width="1.2" fill="none" />
<path d="M693.2 131.6 Q695.3 130.3 697 131.3 Q697.6 131.8 697.6 133 V139 M697.6 135.3 Q693 135 692.9 137.3 Q693 139.4 695.3 139.2 Q697 139 697.6 137.6" stroke="#9a9a9a" stroke-width="1.1" fill="none"/>
<path d="M703.50 133.00 L706.50 136.00 L709.50 133.00" stroke="#9a9a9a" stroke-width="1.0" fill="none" />
<rect x="727" y="138" width="16" height="4" rx="0" stroke="none" stroke-width="0" fill="#6a6a6a"/>
<path d="M731 136.5 L733.5 134 M733.5 134 L740.6 126.9 A1.4 1.4 0 0 1 742.6 126.9 L743.3 127.6 A1.4 1.4 0 0 1 743.3 129.6 L736.2 136.7 Z" stroke="#9a9a9a" stroke-width="1.1" fill="none" />
<path d="M730 137 L732.5 132.5 L735 135 Z" fill="#7a7a7a"/>
<path d="M750.30 133.00 L753.30 136.00 L756.30 133.00" stroke="#9a9a9a" stroke-width="1.0" fill="none" />
<path d="M771.6 137 L776.2 126 L780.8 137 M773.4 133.2 H779" stroke="#9a9a9a" stroke-width="1.2" fill="none" />
<rect x="767.8" y="138" width="16.2" height="4" rx="0" stroke="none" stroke-width="0" fill="#6a6a6a"/>
<path d="M791.60 133.00 L794.60 136.00 L797.60 133.00" stroke="#9a9a9a" stroke-width="1.0" fill="none" />
<path d="M799.5 172.0 V164.5 H807.0" stroke="#8a8a8a" stroke-width="1" fill="none" />
<path d="M801.5 166.5 L806.5 171.5 M802.5 171.5 H806.5 V167.5" stroke="#8a8a8a" stroke-width="1" fill="none" />
<rect x="823" y="93.9" width="3" height="3" rx="0" stroke="none" stroke-width="0" fill="#8f8f8f"/>
<path d="M828.1 95.4 H838" stroke="#8f8f8f" stroke-width="1.2" fill="none" />
<rect x="823" y="100.0" width="3" height="3" rx="0" stroke="none" stroke-width="0" fill="#8f8f8f"/>
<path d="M828.1 101.5 H838" stroke="#8f8f8f" stroke-width="1.2" fill="none" />
<rect x="823" y="106.1" width="3" height="3" rx="0" stroke="none" stroke-width="0" fill="#8f8f8f"/>
<path d="M828.1 107.6 H838" stroke="#8f8f8f" stroke-width="1.2" fill="none" />
<path d="M846.50 100.90 L849.50 103.90 L852.50 100.90" stroke="#8f8f8f" stroke-width="1.0" fill="none" />
<path d="M869 95.4 H879.3" stroke="#8f8f8f" stroke-width="1.2" fill="none" />
<path d="M869 101.5 H879.3" stroke="#8f8f8f" stroke-width="1.2" fill="none" />
<path d="M869 107.6 H879.3" stroke="#8f8f8f" stroke-width="1.2" fill="none" />
<path d="M887.20 100.90 L890.20 103.90 L893.20 100.90" stroke="#8f8f8f" stroke-width="1.0" fill="none" />
<path d="M908.8 95.4 H923 M917 99.4 H923 M917 103.4 H923 M908.8 107.6 H923" stroke="#8f8f8f" stroke-width="1.2" fill="none" />
<path d="M915 101.4 H909.2 M911.6 99 L909.2 101.4 L911.6 103.8" stroke="#8f8f8f" stroke-width="1.2" fill="none" />
<path d="M935 95.4 H949 M943 99.4 H949 M943 103.4 H949 M935 107.6 H949" stroke="#8f8f8f" stroke-width="1.2" fill="none" />
<path d="M935 101.4 H940.6 M938.2 99 L940.6 101.4 L938.2 103.8" stroke="#8f8f8f" stroke-width="1.2" fill="none" />
<path d="M965.6 95.3 V101 M963.3 97.6 L965.6 95.3 L967.9 97.6 M965.6 103 V108.8 M963.3 106.5 L965.6 108.8 L967.9 106.5" stroke="#8f8f8f" stroke-width="1.2" fill="none" />
<path d="M970 95.4 H979 M970 99.4 H979 M970 103.4 H979 M970 107.6 H979" stroke="#8f8f8f" stroke-width="1.2" fill="none" />
<path d="M984.30 100.90 L987.30 103.90 L990.30 100.90" stroke="#8f8f8f" stroke-width="1.0" fill="none" />
<path d="M823.9 127.5 H838.0 M823.9 131.5 H834.2 M823.9 135.5 H838.0 M823.9 139.5 H834.2" stroke="#8f8f8f" stroke-width="1.2" fill="none" />
<path d="M849.9 127.5 H864.0 M852.0 131.5 H862.0 M849.9 135.5 H864.0 M852.0 139.5 H862.0" stroke="#8f8f8f" stroke-width="1.2" fill="none" />
<path d="M876.0 127.5 H890.0 M880.0 131.5 H890.0 M876.0 135.5 H890.0 M880.0 139.5 H890.0" stroke="#8f8f8f" stroke-width="1.2" fill="none" />
<path d="M902.0 127.5 H916.0 M902.0 131.5 H916.0 M902.0 135.5 H916.0 M902.0 139.5 H916.0" stroke="#8f8f8f" stroke-width="1.2" fill="none" />
<path d="M931.8 130.6 H937 M939 130.6 H944 M931.8 133.6 H937 M939 133.6 H944 M931.8 136.7 H937 M939 136.7 H944" stroke="#8f8f8f" stroke-width="1.2" fill="none" />
<path d="M951.50 132.80 L954.50 135.80 L957.50 132.80" stroke="#8f8f8f" stroke-width="1.0" fill="none" />
<path d="M1009.4 86 V101.8 M1007 99.3 L1009.4 101.8 L1011.8 99.3" stroke="#8f8f8f" stroke-width="1.1" fill="none" />
<path d="M1013.3 93.6 L1016.6 86.3 L1019.9 93.6 M1014.4 91.3 H1018.8" stroke="#8f8f8f" stroke-width="1.1" fill="none" />
<path d="M1016.6 94.2 V101.8 M1014.2 99.3 L1016.6 101.8 L1019 99.3" stroke="#8f8f8f" stroke-width="1.1" fill="none" />
<path d="M1100.75 93.95 L1103.50 96.65 L1106.25 93.95" stroke="#8f8f8f" stroke-width="1.0" fill="none" />
<path d="M1008.8 114.3 H1005.3 V124.3 H1008.8 M1016.5 114.3 H1020.6 V124.3 H1016.5 M1008.8 119.3 H1016.9" stroke="#8f8f8f" stroke-width="1.1" fill="none" />
<path d="M1012.6 112.3 V117.6 M1010.6 114.3 L1012.6 112.3 L1014.6 114.3 M1012.6 121 V126.6 M1010.6 124.6 L1012.6 126.6 L1014.6 124.6" stroke="#8f8f8f" stroke-width="1.1" fill="none" />
<path d="M1080.55 120.15 L1083.30 122.85 L1086.05 120.15" stroke="#8f8f8f" stroke-width="1.0" fill="none" />
<path d="M1005 140.2 H1014.8 L1019.6 144.5 H1011 V147 L1009.5 148.2 H1005 L1008.7 144.2 Z" fill="#7a7a7a"/>
<rect x="1011.3" y="145.1" width="9.5" height="6.6" rx="0" stroke="#8f8f8f" stroke-width="1.1" fill="#292929"/>
<path d="M1013.3 147.2 H1014 M1015.2 147.2 H1019 M1013.3 149.6 H1014 M1015.2 149.6 H1019" stroke="#8f8f8f" stroke-width="1.0" fill="none" />
<path d="M1134.75 145.65 L1137.50 148.35 L1140.25 145.65" stroke="#8f8f8f" stroke-width="1.0" fill="none" />
<path d="M1147.5 172.0 V164.5 H1155.0" stroke="#8a8a8a" stroke-width="1" fill="none" />
<path d="M1149.5 166.5 L1154.5 171.5 M1150.5 171.5 H1154.5 V167.5" stroke="#8a8a8a" stroke-width="1" fill="none" />
<rect x="1168.5" y="90.5" width="137" height="61" rx="4.5" fill="#404040" stroke="#5c5c5c" stroke-width="1"/>
<path d="M1291.5 91 H1301 A4 4 0 0 1 1305 95 V147 A4 4 0 0 1 1301 151 H1291.5 Z" fill="#262626"/>
<path d="M1291.5 91 V151" stroke="#5c5c5c" stroke-width="1" fill="none" />
<path d="M1291.5 110.9 H1305 M1291.5 130.2 H1305" stroke="#5c5c5c" stroke-width="1.4" fill="none" />
<rect x="1173.9" y="95.9" width="12.3" height="10.2" rx="0" stroke="#e2e2e2" stroke-width="1.0" fill="none"/>
<rect x="1172.6000000000001" y="94.60000000000001" width="2.6" height="2.6" rx="0" stroke="none" stroke-width="0" fill="#3a96dd"/>
<rect x="1184.9" y="94.60000000000001" width="2.6" height="2.6" rx="0" stroke="none" stroke-width="0" fill="#3a96dd"/>
<rect x="1172.6000000000001" y="104.8" width="2.6" height="2.6" rx="0" stroke="none" stroke-width="0" fill="#3a96dd"/>
<rect x="1184.9" y="104.8" width="2.6" height="2.6" rx="0" stroke="none" stroke-width="0" fill="#3a96dd"/>
<path d="M1177.2 104 L1180.2 97.5 L1183.2 104 M1178.3 101.8 H1182.1" stroke="#3a96dd" stroke-width="1.2" fill="none" />
<path d="M1192.4 93.4 L1207.6 108.6" stroke="#e2e2e2" stroke-width="1.1" fill="none" />
<path d="M1212.3 93.4 L1227.4 108.5 M1224 108.6 H1227.5 V105.1" stroke="#e2e2e2" stroke-width="1.1" fill="none" />
<rect x="1232.6" y="95.6" width="15" height="10.8" rx="0" stroke="#e2e2e2" stroke-width="1.1" fill="none"/>
<ellipse cx="1260.2" cy="101" rx="7.8" ry="5.5" stroke="#e2e2e2" stroke-width="1.1" fill="none"/>
<rect x="1272.4" y="95.6" width="15.3" height="10.8" rx="2.6" stroke="#e2e2e2" stroke-width="1.1" fill="none"/>
<path d="M1180 113.9 L1187.7 128.2 H1172.4 Z" stroke="#e2e2e2" stroke-width="1.1" fill="none" />
<path d="M1192.2 114.6 H1199.6 V127.8 H1207.8" stroke="#e2e2e2" stroke-width="1.1" fill="none" />
<path d="M1212.1 115.6 H1219.4 V126.2 H1227.4 M1224.9 123.7 L1227.4 126.2 L1224.9 128.7" stroke="#e2e2e2" stroke-width="1.1" fill="none" />
<path d="M1232.6 117.2 H1241.5 V114.6 L1247.7 121 L1241.5 127.5 V124.6 H1232.6 Z" stroke="#e2e2e2" stroke-width="1.1" fill="none" />
<path d="M1256.3 113.3 H1263.6 V123 H1266.4 L1259.95 128.5 L1253.5 123 H1256.3 Z" stroke="#e2e2e2" stroke-width="1.1" fill="none" />
<path d="M1272.6 118.6 L1276.6 114.6 H1284.8 Q1282 116.2 1283.2 118.8 Q1284.2 120.4 1286.3 120.4 Q1287.8 120.6 1287.8 122.2 V126.4 Q1287.8 128 1286.2 128 H1274.2 Q1272.6 128 1272.6 126.4 Z" stroke="#e2e2e2" stroke-width="1.1" fill="none" />
<path d="M1174.5 133.4 C1171.5 138 1173 145 1178 146 C1182 147 1188 146 1187.5 143.5 C1187 141.5 1183 143.5 1184 145.5 C1186 148 1175.5 145 1176 141 C1177 136 1185 134 1186.5 135.5 C1188 137.5 1181 141 1175.5 141.5" stroke="#e2e2e2" stroke-width="1.0" fill="none" />
<path d="M1192.3 134.3 C1200 134.5 1207.3 140 1207.5 148.5" stroke="#e2e2e2" stroke-width="1.1" fill="none" />
<path d="M1212.2 139.5 C1214 136 1216 134.5 1217.7 134.6 C1220.5 134.7 1222.5 145 1227.6 146.6" stroke="#e2e2e2" stroke-width="1.1" fill="none" />
<path d="M1241.8 133.5 H1240.4 Q1239.3 133.5 1239.3 134.7 V140.2 L1237.2 141.2 L1239.3 142.2 V147.7 Q1239.3 148.9 1240.4 148.9 H1241.8" stroke="#e2e2e2" stroke-width="1.1" fill="none" />
<path d="M1258.2 133.5 H1259.6 Q1260.7 133.5 1260.7 134.7 V140.2 L1262.8 141.2 L1260.7 142.2 V147.7 Q1260.7 148.9 1259.6 148.9 H1258.2" stroke="#e2e2e2" stroke-width="1.1" fill="none" />
<path d="M1280 133.8 L1282.2 139.2 L1287.8 139.3 L1283.4 142.8 L1285 148.4 L1280 145.3 L1275 148.4 L1276.6 142.8 L1272.2 139.3 L1277.8 139.2 Z" stroke="#e2e2e2" stroke-width="1.1" fill="none" />
<path d="M1295.6 101.8 L1298.6 98.8 L1301.6 101.8" stroke="#6e6e6e" stroke-width="1.1" fill="none" />
<path d="M1295.60 119.10 L1298.60 122.10 L1301.60 119.10" stroke="#f0f0f0" stroke-width="1.4" fill="none" />
<path d="M1295.3 137.5 H1301.9" stroke="#f0f0f0" stroke-width="1.2" fill="none" />
<path d="M1295.60 140.00 L1298.60 143.00 L1301.60 140.00" stroke="#f0f0f0" stroke-width="1.4" fill="none" />
<rect x="1324.3" y="91.3" width="19.4" height="19.4" rx="0" stroke="#ffd27a" stroke-width="0.6" fill="#e8962a"/>
<rect x="1320.6" y="87.6" width="11" height="11" rx="0" stroke="#e6e6e6" stroke-width="1.1" fill="#292929"/>
<rect x="1336.6" y="103.6" width="11" height="11" rx="0" stroke="#e6e6e6" stroke-width="1.1" fill="#292929"/>
<path d="M1330.50 142.00 L1333.50 145.00 L1336.50 142.00" stroke="#e6e6e6" stroke-width="1.4" fill="none" />
<path d="M1376 114.6 H1370.6 Q1369.6 114.6 1369.6 113.6 V88.5 Q1369.6 87.5 1370.6 87.5 H1395.8 Q1396.8 87.5 1396.8 88.5 V96.5 M1396.8 104 V113.6 Q1396.8 114.6 1395.8 114.6 H1388.5" stroke="#9a9a9a" stroke-width="1.1" fill="none" />
<path d="M1386 110.5 L1397 98.5 A1.2 1.2 0 0 1 1399 100 L1388.4 112.6" stroke="#9a9a9a" stroke-width="1.1" fill="none" />
<path d="M1376 114.8 C1378 114.5 1379.5 113 1380.5 111.3 C1382 109 1385.5 109.5 1387 111.2 C1388.6 113.2 1386.5 116.2 1383 116.2 C1380 116.2 1378 115.5 1376 114.8 Z" fill="#8a8a8a"/>
<path d="M1395.85 145.35 L1398.60 148.05 L1401.35 145.35" stroke="#8a8a8a" stroke-width="1.0" fill="none" />
<rect x="1412" y="98.2" width="16" height="3.6" rx="0" stroke="none" stroke-width="0" fill="#6a6a6a"/>
<path d="M1414.6 91.2 L1420.2 85.8 L1426 91.6 L1420.5 97 Z M1420 86.2 V89" stroke="#9a9a9a" stroke-width="1.1" fill="none" />
<path d="M1424.5 88.4 Q1427.2 89 1426.6 93" stroke="#9a9a9a" stroke-width="1.1" fill="none" />
<rect x="1412" y="124.2" width="16" height="3.6" rx="0" stroke="none" stroke-width="0" fill="#6a6a6a"/>
<path d="M1421 113.3 H1413.5 V122.5 H1416" stroke="#9a9a9a" stroke-width="1.1" fill="none" />
<path d="M1418.2 122.3 L1419 119.5 L1425.8 112.7 A1.2 1.2 0 0 1 1427.6 114.5 L1420.8 121.3 Z" stroke="#9a9a9a" stroke-width="1.1" fill="none" />
<path d="M1412.6 148.6 L1417.5 141 H1428 L1426.5 146.8 L1422.5 151.5 H1414.5 Z M1412.6 148.6 H1422.8 L1427.6 141.3 M1422.8 148.6 V151.5" stroke="#9a9a9a" stroke-width="1.1" fill="none" />
<path d="M1413 148.9 H1422.6 V151.3 H1414.6 Z" fill="#7a7a7a"/>
<path d="M1485.55 93.95 L1488.30 96.65 L1491.05 93.95" stroke="#8a8a8a" stroke-width="1.0" fill="none" />
<path d="M1510.05 120.15 L1512.80 122.85 L1515.55 120.15" stroke="#8a8a8a" stroke-width="1.0" fill="none" />
<path d="M1505.55 145.65 L1508.30 148.35 L1511.05 145.65" stroke="#8a8a8a" stroke-width="1.0" fill="none" />
<path d="M1518.5 172.0 V164.5 H1526.0" stroke="#8a8a8a" stroke-width="1" fill="none" />
<path d="M1520.5 166.5 L1525.5 171.5 M1521.5 171.5 H1525.5 V167.5" stroke="#8a8a8a" stroke-width="1" fill="none" />
<circle cx="1552.4" cy="91.5" r="4.8" stroke="#dcdcdc" stroke-width="1.1" fill="none"/>
<path d="M1548.9 95 L1543.2 100.8" stroke="#dcdcdc" stroke-width="1.3" fill="none" />
<path d="M1545.4 117.2 Q1543.2 120.5 1545.2 122.8 Q1546.6 124.5 1550.2 124.5 M1547.9 122.2 L1550.2 124.5 L1547.9 126.8" stroke="#3a96dd" stroke-width="1.3" fill="none" />
<path d="M1615.80 119.80 L1618.80 122.80 L1621.80 119.80" stroke="#e6e6e6" stroke-width="1.3" fill="none" />
<path d="M1544.6 138.6 V152 L1547.4 149.3 L1549.5 153.6 L1551.6 152.6 L1549.5 148.4 H1553.8 Z" stroke="#dcdcdc" stroke-width="1.1" fill="none" />
<path d="M1597.05 145.85 L1599.80 148.55 L1602.55 145.85" stroke="#e6e6e6" stroke-width="1.3" fill="none" />
<rect x="1659.3" y="86.2" width="11.5" height="21.4" rx="5.75" fill="#0063b1" stroke="#72c3f3" stroke-width="0.8"/>
<path d="M1655.8 101 A9.3 9.3 0 0 0 1674.4 101 M1665 110.4 V116" stroke="#d0d0d0" stroke-width="1.4" fill="none" />
<path d="M1661.50 142.00 L1664.50 145.00 L1667.50 142.00" stroke="#e6e6e6" stroke-width="1.4" fill="none" />
<path d="M1716 90.6 H1736.4 V111.4 H1709.5 V105" stroke="#dedede" stroke-width="1.1" fill="none" />
<path d="M1719.5 93 H1734 V109 H1711.8 V103.5 M1716.5 97.8 H1734 M1728.5 97.8 V109" stroke="#dedede" stroke-width="1.1" fill="none" />
<path d="M1712.4 85.3 H1720 L1716.8 92.2 H1720.3 L1707.5 104.8 L1711.6 95.8 H1707.8 Z" fill="#e8962a" stroke="#ffd050" stroke-width="0.7"/>
<path d="M1892.50 161.80 L1897.50 166.80 L1902.50 161.80" stroke="#e0e0e0" stroke-width="1.3" fill="none" />
<circle cx="1730" cy="63" r="5.6" stroke="#f0f0f0" stroke-width="1.2" fill="none"/>
<circle cx="1730" cy="63" r="3.3" fill="#f0f0f0"/>
<path d="M1809.1 58.9 H1819.1 V64.2 H1812.8 L1810.3 67 V64.2 H1809.1 Z" stroke="#f0f0f0" stroke-width="1.2" fill="none" />
<path d="M1848.5 61.3 V68.6 H1857.6 V64.8" stroke="#ffffff" stroke-width="1.1" fill="none" />
<path d="M1850.6 65.6 Q1851 60.8 1856.6 60.8 M1854.6 58.3 L1857.4 61 L1854.3 63.6" stroke="#ffffff" stroke-width="1.2" fill="none" />
<path d="M1795 23.5 H1805.3" stroke="#e6e6e6" stroke-width="1.1" fill="none" />
<path d="M1842.8 20.8 H1851.2 V29.2 H1842.8 Z M1845 20.8 V19.2 Q1845 18.6 1845.6 18.6 H1853 Q1853.6 18.6 1853.6 19.2 V26.6 Q1853.6 27.2 1853 27.2 H1851.2" stroke="#e6e6e6" stroke-width="1.1" fill="none" />
<path d="M1891 18.8 L1901 28.8 M1901 18.8 L1891 28.8" stroke="#e6e6e6" stroke-width="1.1" fill="none" />
<path d="M1754 17.8 L1759.2 23 L1747.6 30.6 L1745.6 28.6 Z M1750.3 29.2 A2.2 2.2 0 0 0 1754.6 27.4" stroke="#e6e6e6" stroke-width="1.2" fill="none" />
<path d="M1756.5 16.2 V17.4 M1758.6 18.6 L1760.6 16.5 M1759.4 20.5 H1760.9" stroke="#e6e6e6" stroke-width="1.0" fill="none" />
<path d="M84.5 1062.5 H90.5 V1074.5 H84.5 Z M90.5 1062.5 H97.3 V1068.5 M90.5 1074.5 H91.5" stroke="#d0d0d0" stroke-width="1.1" fill="none" />
<path d="M92 1069 L97.8 1075 M97.8 1069 L92 1075" stroke="#d0d0d0" stroke-width="1.1" fill="none" />
<circle cx="253.9" cy="1063.2" r="1.7" stroke="#e6e6e6" stroke-width="1.1" fill="none"/>
<path d="M248.8 1064.6 Q253.9 1067.4 258.9 1064.6 M251.9 1066.9 Q252.2 1070.5 251.1 1073.9 H252.6 M256.4 1066.9 V1069.6" stroke="#e6e6e6" stroke-width="1.1" fill="none" />
<path d="M254.4 1071.3 L257.4 1074.2 L262.6 1069.3" stroke="#e6e6e6" stroke-width="1.1" fill="none" />
<path d="M1488.8 1069.8 H1504.6 M1488.8 1072.5 H1504.6 M1488.8 1075.2 H1504.6 M1493.5 1067 H1500 M1494.3 1064.5 L1496.7 1062 L1499.1 1064.5" stroke="#d8d8d8" stroke-width="1.0" fill="none" />
<rect x="1569.4" y="1062.2" width="13.6" height="11.6" rx="0" stroke="#d8d8d8" stroke-width="1.0" fill="none"/>
<rect x="1573" y="1064.5" width="7.5" height="4.5" rx="0" stroke="#d8d8d8" stroke-width="1.0" fill="none"/>
<path d="M1571.5 1062.2 V1073.8" stroke="#d8d8d8" stroke-width="1.0" fill="none" />
<rect x="1609" y="1062.5" width="5.6" height="4.6" rx="0" stroke="#d8d8d8" stroke-width="1.0" fill="none"/>
<rect x="1617.2" y="1062.5" width="5.6" height="4.6" rx="0" stroke="#d8d8d8" stroke-width="1.0" fill="none"/>
<rect x="1609" y="1069.5" width="5.6" height="4.6" rx="0" stroke="#d8d8d8" stroke-width="1.0" fill="none"/>
<rect x="1617.2" y="1069.5" width="5.6" height="4.6" rx="0" stroke="#d8d8d8" stroke-width="1.0" fill="none"/>
<path d="M1649.3 1062.5 H1655.6 V1074.4 H1649.3 Z M1655.6 1062.5 H1662 V1074.4 H1655.6 M1650.8 1065.5 H1654 M1650.8 1068 H1654 M1650.8 1070.5 H1654 M1657.2 1065.5 H1660.4 M1657.2 1068 H1660.4 M1657.2 1070.5 H1660.4" stroke="#d8d8d8" stroke-width="1.0" fill="none" />
<path d="M1689 1062.7 H1701.8 M1690 1062.7 V1069.5 H1700.8 V1062.7 M1695.4 1069.5 V1074.8 M1692 1074.8 H1698.8 M1693 1065 H1697.5 V1067.5 H1693 Z" stroke="#d8d8d8" stroke-width="1.0" fill="none" />
<path d="M1722.2 1068 H1729.2 M1840.2 1068 H1848 M1844.1 1064.1 V1071.9" stroke="#d8d8d8" stroke-width="1.1" fill="none" />
<path d="M1735 1068.2 H1834.6" stroke="#8a8a8a" stroke-width="1.0" fill="none" />
<rect x="1785.6" y="1062.6" width="5.3" height="11.4" rx="1" stroke="none" stroke-width="0" fill="#a8a8a8"/>
<rect x="1904.3" y="1064.5" width="7" height="7" rx="0" stroke="#e8e8e8" stroke-width="1.2" fill="none"/>
<path d="M1905.6 1063 L1907.8 1060.8 L1910 1063 M1905.6 1073 L1907.8 1075.2 L1910 1073 M1902.8 1065.8 L1900.6 1068 L1902.8 1070.2 M1912.8 1065.8 L1915 1068 L1912.8 1070.2" stroke="#e8e8e8" stroke-width="1.0" fill="none" />
<path d="M17.6 196.3 V207 M17.6 196.5 Q16 198.6 13.2 199.6" stroke="#e8e8e8" stroke-width="1.3" fill="none" /></svg>
</body></html>
